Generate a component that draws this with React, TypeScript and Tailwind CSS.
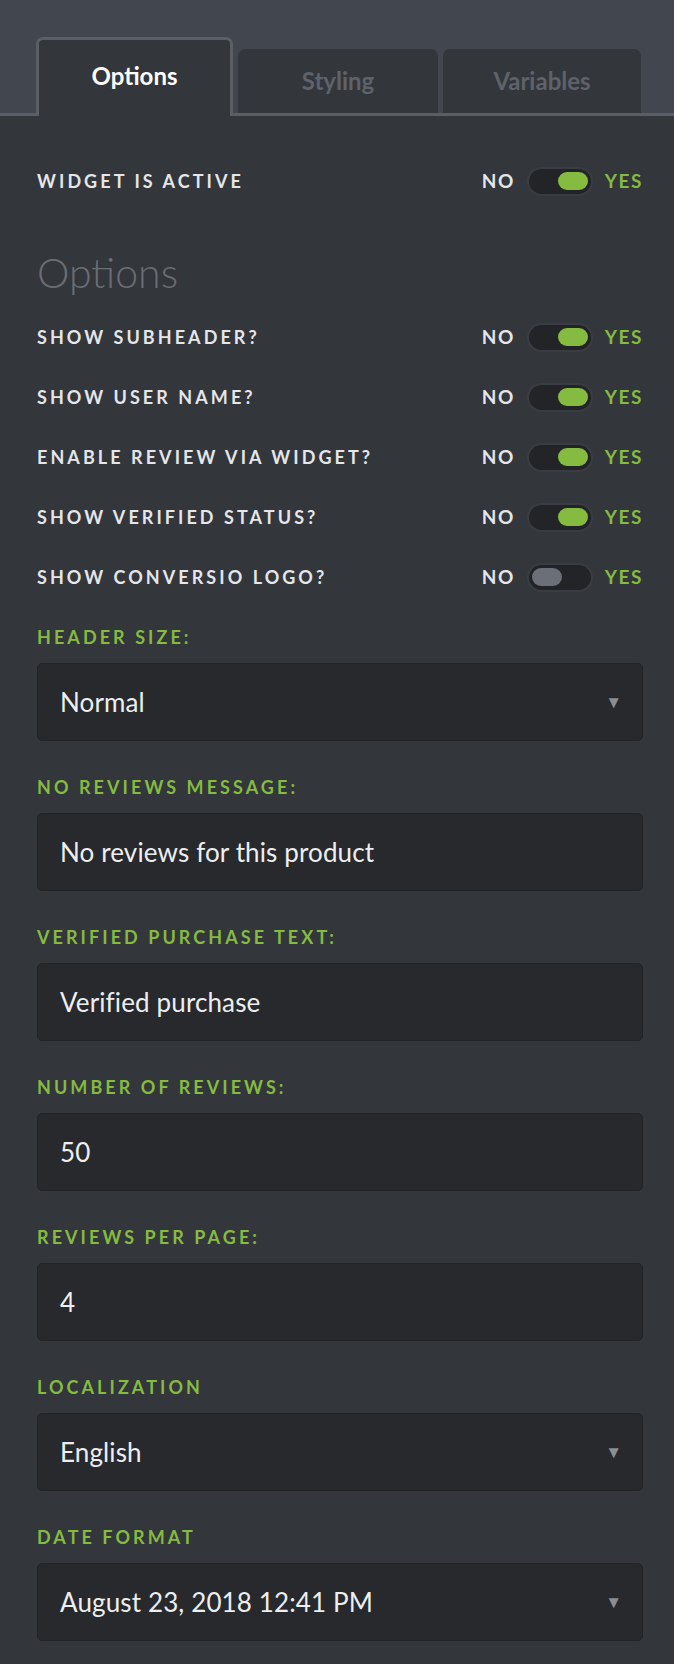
import { useState } from 'react';

const font = { fontFamily: 'Lato, "Open Sans", sans-serif' };

function Toggle({ on }: { on: boolean }) {
  return (
    <div className="flex items-center">
      <span className="text-[19px] font-bold tracking-[0.08em] text-[#e4e6e9]">NO</span>
      <div className="ml-[12px] flex h-[29px] w-[66px] items-center rounded-full border-2 border-[#393d43] bg-[#222428] px-[3px]">
        <div
          className={
            on
              ? 'ml-auto h-[18px] w-[30px] rounded-full bg-[#84bb40]'
              : 'h-[18px] w-[30px] rounded-full bg-[#6b7078]'
          }
        />
      </div>
      <span className="ml-[12px] text-[19px] font-bold tracking-[0.08em] text-[#84bb40]">YES</span>
    </div>
  );
}

function ToggleRow({ label, on }: { label: string; on: boolean }) {
  return (
    <div className="flex h-[60px] items-center justify-between">
      <span className="text-[18px] font-bold tracking-[0.17em] text-[#e4e6e9]">{label}</span>
      <Toggle on={on} />
    </div>
  );
}

function Field({ label, value, select }: { label: string; value: string; select?: boolean }) {
  return (
    <div className="flex flex-col">
      <div className="h-[20px] text-[18px] font-bold leading-[20px] tracking-[0.17em] text-[#84bb40]">
        {label}
      </div>
      <div className="mt-[16px] flex h-[78px] items-center justify-between rounded-[5px] border border-[#212327] bg-[#27292d] pl-[22px] pr-[20px]">
        <span className="text-[26px] tracking-[0.005em] text-[#eceef0]">{value}</span>
        {select && <span className="text-[17px] text-[#8b8e93]">▼</span>}
      </div>
    </div>
  );
}

export default function App() {
  const [tab, setTab] = useState('Options');
  const tabs = [
    { name: 'Options', w: 'w-[197px]' },
    { name: 'Styling', w: 'w-[200px]' },
    { name: 'Variables', w: 'w-[198px]' },
  ];

  return (
    <div className="min-h-[1664px] w-[674px] bg-[#33363b]" style={font}>
      <div className="flex h-[116px] items-end gap-[5px] border-b-[3px] border-[#5a5f66] bg-[#42464e] pl-[36px]">
        {tabs.map((t) =>
          t.name === tab ? (
            <button
              key={t.name}
              onClick={() => setTab(t.name)}
              className={`${t.w} -mb-[3px] flex h-[79px] items-center justify-center rounded-t-[7px] border-[3px] border-b-0 border-[#5a5f66] bg-[#33363b] pb-[4px] text-[24px] font-bold text-white`}
            >
              {t.name}
            </button>
          ) : (
            <button
              key={t.name}
              onClick={() => setTab(t.name)}
              className={`${t.w} flex h-[64px] items-center justify-center rounded-t-[7px] bg-[#33363b] text-[24px] font-bold text-[#5e626a]`}
            >
              {t.name}
            </button>
          ),
        )}
      </div>

      <div className="pl-[37px] pr-[31px] pt-[35px] pb-[24px]">
        <ToggleRow label="WIDGET IS ACTIVE" on />

        <div className="mt-[32px] flex h-[64px] items-start">
          <h2 className="h-[60px] text-[41px] font-light leading-[60px] text-[#6a6e74]">Options</h2>
        </div>

        <ToggleRow label="SHOW SUBHEADER?" on />
        <ToggleRow label="SHOW USER NAME?" on />
        <ToggleRow label="ENABLE REVIEW VIA WIDGET?" on />
        <ToggleRow label="SHOW VERIFIED STATUS?" on />
        <ToggleRow label="SHOW CONVERSIO LOGO?" on={false} />

        <div className="mt-[20px] flex flex-col gap-[36px]">
          <Field label="HEADER SIZE:" value="Normal" select />
          <Field label="NO REVIEWS MESSAGE:" value="No reviews for this product" />
          <Field label="VERIFIED PURCHASE TEXT:" value="Verified purchase" />
          <Field label="NUMBER OF REVIEWS:" value="50" />
          <Field label="REVIEWS PER PAGE:" value="4" />
          <Field label="LOCALIZATION" value="English" select />
          <Field label="DATE FORMAT" value="August 23, 2018 12:41 PM" select />
        </div>
      </div>
    </div>
  );
}
